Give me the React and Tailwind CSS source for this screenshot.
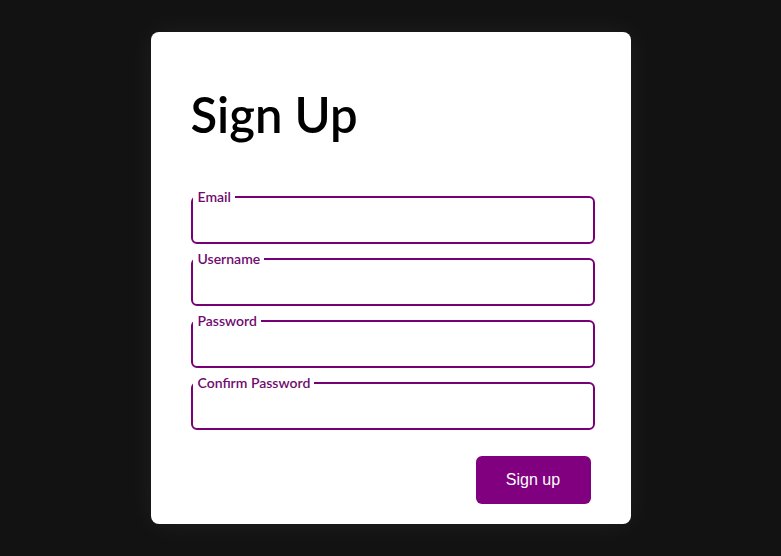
const Field = ({ label, type }) => {
    return (
        <fieldset className="border-2 border-[#770077] rounded-md w-[404px] px-0">
            <legend className="ml-0 pl-[5px] pr-[4px] text-[14px] leading-[16px] font-semibold text-[#6f0a6f] font-['Lato',sans-serif]">{label}</legend>
            <input type={type} className="w-full h-[37px] px-2 outline-0 bg-transparent text-[16px] text-[#000]" />
        </fieldset>
    )
}

export default function App() {
    return (
        <div className="min-h-screen bg-[#121212] flex items-center justify-center">
            <div className="w-[480px] h-[492px] bg-white rounded-lg shadow-[0_0_30px_rgba(255,255,255,0.06)] px-10 pt-[53px]">
                <h1 className="text-[49px] leading-[1.2] font-semibold text-black font-['Lato',sans-serif]">Sign Up</h1>
                <form className="mt-[45px] flex flex-col gap-[7px]">
                    <Field label="Email" type="email" />
                    <Field label="Username" type="text" />
                    <Field label="Password" type="password" />
                    <Field label="Confirm Password" type="password" />
                    <div className="flex justify-end mt-[19px]">
                        <button type="button" className="w-[115px] h-12 bg-[#800080] text-white rounded-md text-[16px] font-['Liberation_Sans',Arial,sans-serif]">Sign up</button>
                    </div>
                </form>
            </div>
        </div>
    )
}
